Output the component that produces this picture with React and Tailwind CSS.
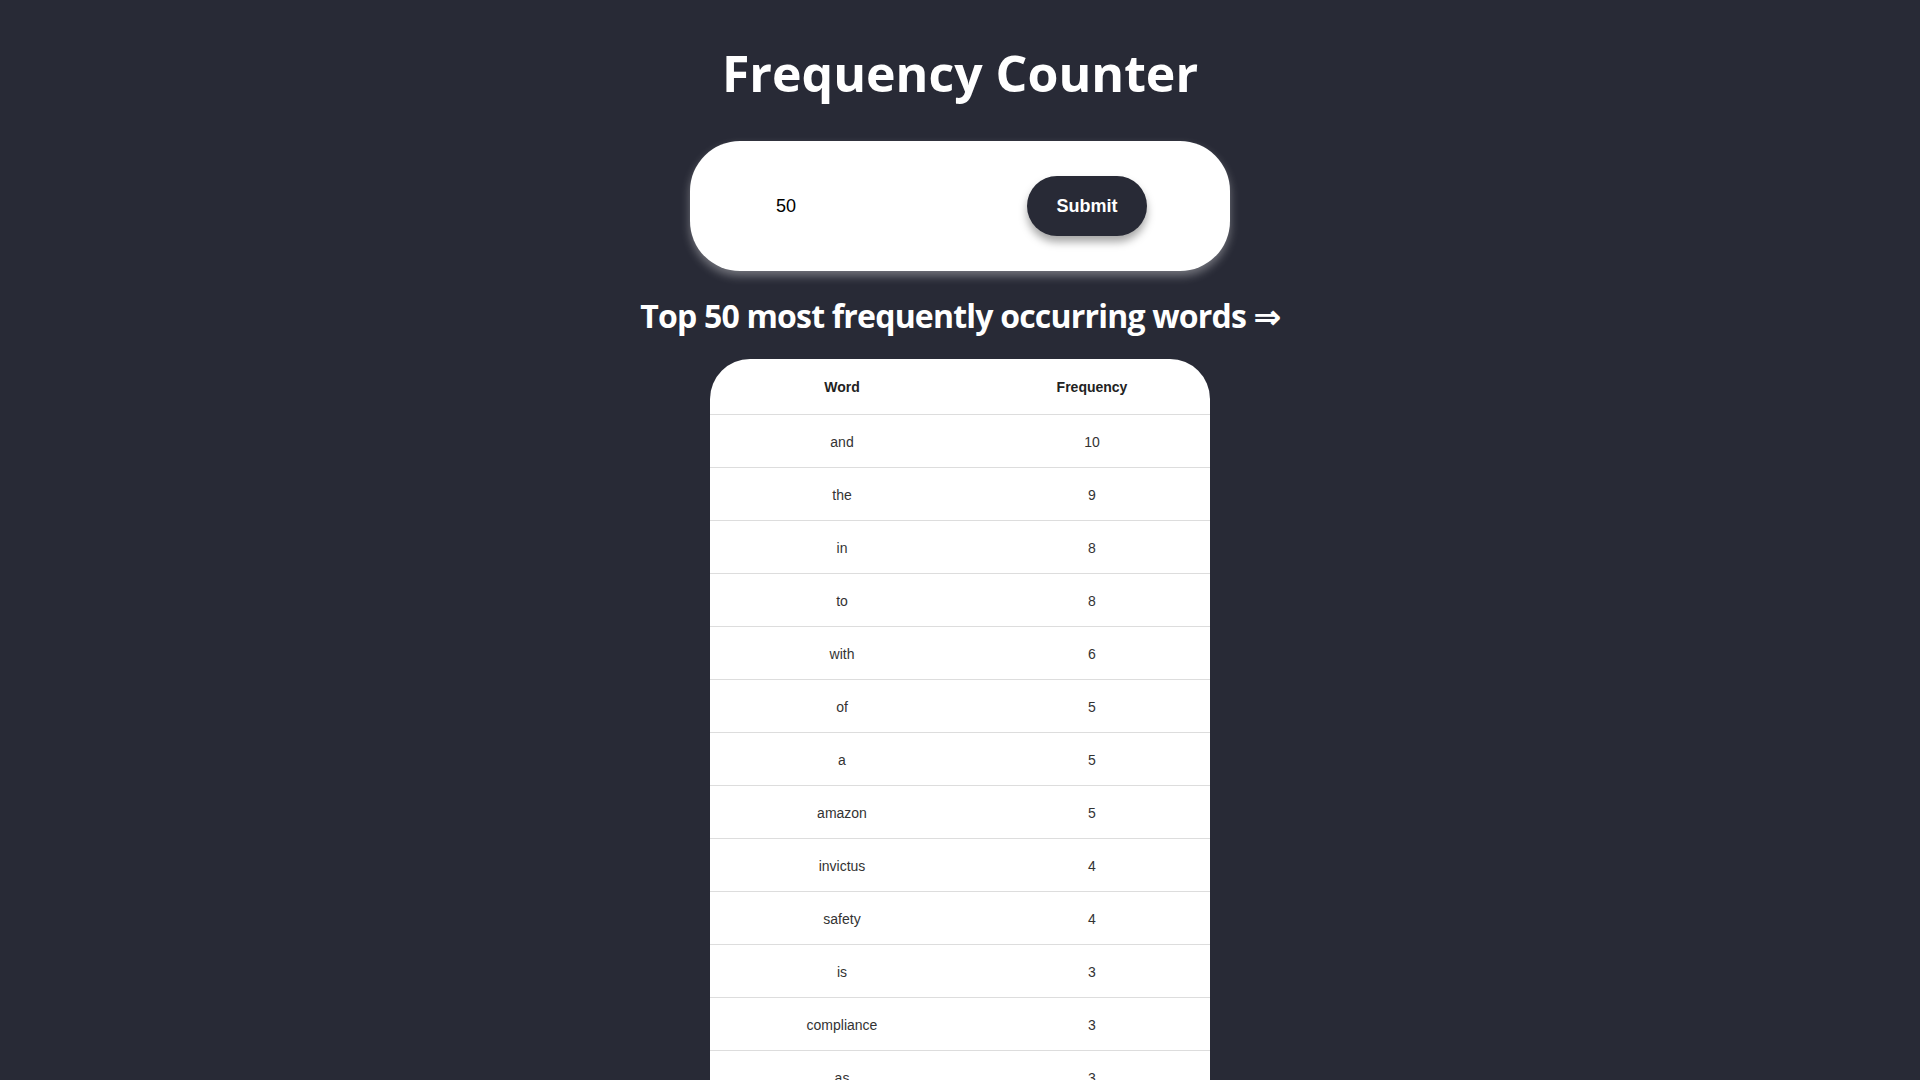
import React from "react";

const rows = [
  ["and", 10],
  ["the", 9],
  ["in", 8],
  ["to", 8],
  ["with", 6],
  ["of", 5],
  ["a", 5],
  ["amazon", 5],
  ["invictus", 4],
  ["safety", 4],
  ["is", 3],
  ["compliance", 3],
  ["as", 3],
  ["for", 3],
  ["our", 2],
  ["we", 2],
];

export default function App() {
  return (
    <div className="min-h-screen bg-[#282a36] flex flex-col items-center pt-[44px] pb-10">
      <h1
        className="text-white font-bold text-[50px] leading-[58px] m-0"
        style={{ fontFamily: '"Open Sans", sans-serif' }}
      >
        Frequency Counter
      </h1>
      <div className="mt-[39px] w-[540px] h-[130px] bg-white rounded-[50px] flex items-center justify-between pl-[86px] pr-[83px] shadow-[0_5px_10px_rgba(255,255,255,0.35)]">
        <input
          defaultValue="50"
          className="w-[200px] outline-none border-0 bg-transparent text-[18px] text-black"
          style={{ fontFamily: '"Liberation Sans", Arial, sans-serif' }}
        />
        <button
          className="w-[120px] h-[60px] rounded-full bg-[#282a36] text-white font-bold text-[18px] shadow-[0_6px_8px_rgba(0,0,0,0.35)]"
          style={{ fontFamily: '"Liberation Sans", Arial, sans-serif' }}
        >
          Submit
        </button>
      </div>
      <h2
        className="mt-[26px] text-white font-bold text-[32px] leading-[38px] tracking-[-0.8px]"
        style={{ fontFamily: '"Open Sans", sans-serif' }}
      >
        Top 50 most frequently occurring words ⇒
      </h2>
      <div
        className="mt-[24px] w-[500px] bg-white rounded-t-[40px] overflow-hidden text-[14px]"
        style={{ fontFamily: '"Liberation Sans", Arial, sans-serif' }}
      >
        <div className="grid grid-cols-2 h-[56px] items-center border-b border-[#dddddd] font-bold text-[#222] pt-[2px]">
          <div className="text-center pl-[14px]">Word</div>
          <div className="text-center pl-[14px]">Frequency</div>
        </div>
        {rows.map(([w, f]) => (
          <div
            key={w}
            className="grid grid-cols-2 h-[53px] items-center border-b border-[#dddddd] text-[#333] pt-[2px]"
          >
            <div className="text-center pl-[14px]">{w}</div>
            <div className="text-center pl-[14px]">{f}</div>
          </div>
        ))}
      </div>
    </div>
  );
}
